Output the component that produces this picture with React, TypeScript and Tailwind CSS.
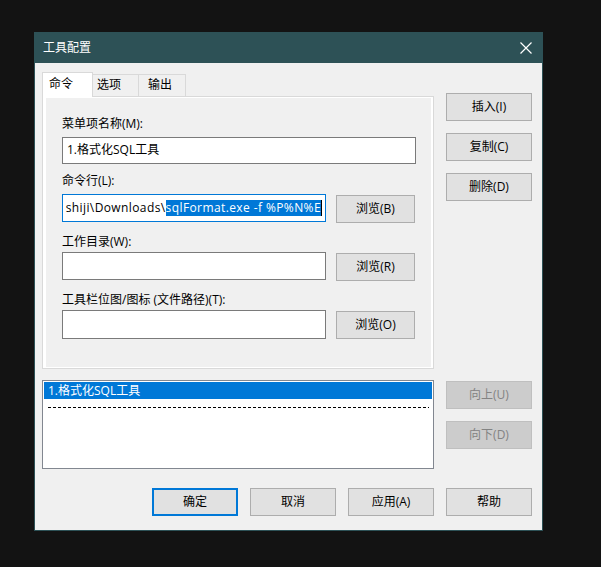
const font = {
  fontFamily: '"Open Sans", "Noto Sans CJK SC", sans-serif',
};

const Btn = ({
  label,
  disabled,
  primary,
}: {
  label: string;
  disabled?: boolean;
  primary?: boolean;
}) => (
  <div
    className={
      "flex h-[28px] w-[86px] items-center justify-center text-[12px] leading-[16px] " +
      (disabled
        ? "border border-[#bfbfbf] bg-[#cccccc] text-[#838383]"
        : primary
          ? "border-2 border-[#0078d7] bg-[#e1e1e1] text-black"
          : "border border-[#adadad] bg-[#e1e1e1] text-black")
    }
  >
    {label}
  </div>
);

const Browse = ({ label }: { label: string }) => (
  <div className="mt-px flex h-[28px] w-[79px] items-center justify-center border border-[#adadad] bg-[#e1e1e1] text-[12px] leading-[16px] text-black">
    {label}
  </div>
);

const Label = ({ text, mt }: { text: string; mt: string }) => (
  <div className={"h-[16px] text-[12px] leading-[16px] text-black " + mt}>{text}</div>
);

export default function App() {
  return (
    <div className="min-h-[567px] w-[601px] bg-[#131313] pl-[34px] pt-[32px]" style={font}>
      <div className="flex h-[499px] w-[509px] flex-col border border-[#2d5156] bg-[#f0f0f0]">
        {/* title bar */}
        <div className="flex h-[30px] items-center justify-between bg-[#2d5156] pl-[8px] pr-[8px]">
          <span className="text-[12px] leading-[16px] text-white">工具配置</span>
          <svg width="14" height="14" viewBox="0 0 14 14" className="mr-[1px]">
            <path d="M1.5 1.5 L12.5 12.5 M12.5 1.5 L1.5 12.5" stroke="#fff" strokeWidth="1.2" />
          </svg>
        </div>

        <div className="flex pl-[7px] pr-[10px]">
          {/* left column */}
          <div className="flex w-[392px] flex-col pt-[9px]">
            {/* tabs */}
            <div className="relative z-10 flex h-[25px] items-end">
              <div className="flex h-[25px] w-[51px] items-start border border-b-0 border-[#d9d9d9] bg-white pl-[6px] pt-[3px] text-[12px] leading-[16px] text-black">
                命令
              </div>
              <div className="mb-px flex h-[22px] w-[46px] items-start border border-b-0 border-l-0 border-[#d9d9d9] bg-[#f0f0f0] pl-[4px] pt-[2px] text-[12px] leading-[16px] text-black">
                选项
              </div>
              <div className="mb-px flex h-[22px] w-[47px] items-start border border-b-0 border-l-0 border-[#d9d9d9] bg-[#f0f0f0] pl-[9px] pt-[2px] text-[12px] leading-[16px] text-black">
                输出
              </div>
            </div>
            <div className="-mt-px h-[273px] border border-[#d9d9d9] bg-white pb-[1px] pl-[3px] pr-[2px] pt-[1px]">
              <div className="flex h-full flex-col bg-[#f0f0f0] pl-[16px]">
                <Label text="菜单项名称(M):" mt="mt-[18px]" />
                <div className="mt-[5px] flex h-[27px] w-[354px] items-center border border-[#7a7a7a] bg-white pb-[2px] pl-[4px] text-[12px] leading-[16px] text-black">
                  1.格式化SQL工具
                </div>

                <Label text="命令行(L):" mt="mt-[9px]" />
                <div className="mt-[5px] flex items-start gap-[10px]">
                  <div className="flex h-[28px] w-[264px] items-center justify-end overflow-hidden border border-[#0078d7] bg-white pr-[3px] text-[12px] leading-[16px] tracking-[0.4px] text-black">
                    <span className="whitespace-nowrap">shiji\Downloads\</span>
                    <span className="whitespace-nowrap bg-[#0078d7] text-white">sqlFormat.exe -f %P%N%E</span>
                    <span className="h-[16px] w-px bg-black" />
                  </div>
                  <Browse label="浏览(B)" />
                </div>

                <Label text="工作目录(W):" mt="mt-[11px]" />
                <div className="mt-[2px] flex items-start gap-[10px]">
                  <div className="h-[28px] w-[264px] border border-[#7a7a7a] bg-white" />
                  <Browse label="浏览(R)" />
                </div>

                <Label text="工具栏位图/图标 (文件路径)(T):" mt="mt-[11px]" />
                <div className="mt-[2px] flex items-start gap-[10px]">
                  <div className="h-[29px] w-[264px] border border-[#7a7a7a] bg-white" />
                  <Browse label="浏览(O)" />
                </div>
              </div>
            </div>

            {/* list box */}
            <div className="mt-[11px] h-[89px] border border-[#828790] bg-white px-px pt-px">
              <div className="flex h-[17px] items-center bg-[#0078d7] pl-[4px] text-[12px] leading-[16px] text-white">
                1.格式化SQL工具
              </div>
              <div className="ml-[4px] mr-[3px] mt-[8px] h-px bg-[repeating-linear-gradient(to_right,#000_0_3px,transparent_3px_5px)]" />
            </div>
          </div>

          {/* right column */}
          <div className="ml-[12px] flex flex-col pt-[30px]">
            <div className="flex flex-col gap-[12px]">
              <Btn label="插入(I)" />
              <Btn label="复制(C)" />
              <Btn label="删除(D)" />
            </div>
            <div className="mt-[180px] flex flex-col gap-[12px]">
              <Btn label="向上(U)" disabled />
              <Btn label="向下(D)" disabled />
            </div>
          </div>
        </div>

        {/* bottom buttons */}
        <div className="mt-[19px] flex justify-end gap-[12px] pr-[10px]">
          <Btn label="确定" primary />
          <Btn label="取消" />
          <Btn label="应用(A)" />
          <Btn label="帮助" />
        </div>
      </div>
    </div>
  );
}
